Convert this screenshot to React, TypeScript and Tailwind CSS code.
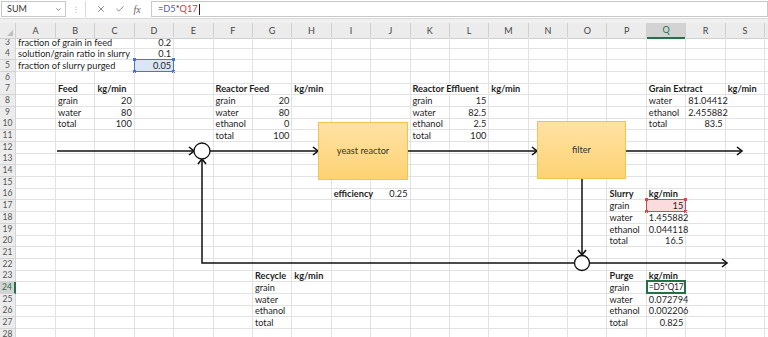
import { X, Check, ChevronDown } from "lucide-react";

type Cell = { t: string; span?: number; r?: boolean; b?: boolean; hl?: "blue" | "red" | "green" };

const COLS = ["A", "B", "C", "D", "E", "F", "G", "H", "I", "J", "K", "L", "M", "N", "O", "P", "Q", "R", "S", "T"];
const ROWS = Array.from({ length: 26 }, (_, i) => i + 3);

const data: Record<number, Record<string, Cell>> = {
  3: { A: { t: "fraction of grain in feed", span: 3 }, D: { t: "0.2", r: true } },
  4: { A: { t: "solution/grain ratio in slurry", span: 3 }, D: { t: "0.1", r: true } },
  5: { A: { t: "fraction of slurry purged", span: 3 }, D: { t: "0.05", r: true, hl: "blue" } },
  7: {
    B: { t: "Feed", b: true },
    C: { t: "kg/min", b: true },
    F: { t: "Reactor Feed", b: true, span: 2 },
    H: { t: "kg/min", b: true },
    K: { t: "Reactor Effluent", b: true, span: 2 },
    M: { t: "kg/min", b: true },
    Q: { t: "Grain Extract", b: true, span: 2 },
    S: { t: "kg/min", b: true },
  },
  8: {
    B: { t: "grain" },
    C: { t: "20", r: true },
    F: { t: "grain" },
    G: { t: "20", r: true },
    K: { t: "grain" },
    L: { t: "15", r: true },
    Q: { t: "water" },
    R: { t: "81.04412", r: true },
  },
  9: {
    B: { t: "water" },
    C: { t: "80", r: true },
    F: { t: "water" },
    G: { t: "80", r: true },
    K: { t: "water" },
    L: { t: "82.5", r: true },
    Q: { t: "ethanol" },
    R: { t: "2.455882", r: true },
  },
  10: {
    B: { t: "total" },
    C: { t: "100", r: true },
    F: { t: "ethanol" },
    G: { t: "0", r: true },
    K: { t: "ethanol" },
    L: { t: "2.5", r: true },
    Q: { t: "total" },
    R: { t: "83.5", r: true },
  },
  11: { F: { t: "total" }, G: { t: "100", r: true }, K: { t: "total" }, L: { t: "100", r: true } },
  16: { I: { t: "efficiency", b: true }, J: { t: "0.25", r: true }, P: { t: "Slurry", b: true }, Q: { t: "kg/min", b: true } },
  17: { P: { t: "grain" }, Q: { t: "15", r: true, hl: "red" } },
  18: { P: { t: "water" }, Q: { t: "1.455882", r: true } },
  19: { P: { t: "ethanol" }, Q: { t: "0.044118", r: true } },
  20: { P: { t: "total" }, Q: { t: "16.5", r: true } },
  23: { G: { t: "Recycle", b: true }, H: { t: "kg/min", b: true }, P: { t: "Purge", b: true }, Q: { t: "kg/min", b: true } },
  24: { G: { t: "grain" }, P: { t: "grain" }, Q: { t: "=D5*Q17", hl: "green" } },
  25: { G: { t: "water" }, P: { t: "water" }, Q: { t: "0.072794", r: true } },
  26: { G: { t: "ethanol" }, P: { t: "ethanol" }, Q: { t: "0.002206", r: true } },
  27: { G: { t: "total" }, P: { t: "total" }, Q: { t: "0.825", r: true } },
};

function Handles({ color }: { color: string }) {
  const sq = "absolute w-[3px] h-[3px] " + color;
  return (
    <>
      <span className={sq + " -left-[2px] -top-[2px]"} />
      <span className={sq + " -right-[2px] -top-[2px]"} />
      <span className={sq + " -left-[2px] -bottom-[2px]"} />
      <span className={sq + " -right-[2px] -bottom-[2px]"} />
    </>
  );
}

function SheetRow({ row }: { row: number }) {
  const cells = data[row] || {};
  const out = [];
  let i = 0;
  while (i < COLS.length) {
    const col = COLS[i];
    const c = cells[col];
    const span = c?.span || 1;
    let bg = "";
    if (c?.hl === "blue") bg = "bg-[#dbe5f5]";
    if (c?.hl === "red") bg = "bg-[#fadcdc]";
    if (c?.hl === "green") bg = "tracking-[-0.3px] text-[8.5px]";
    out.push(
      <div
        key={col}
        className={
          "relative border-r border-b border-[#e2e2e2] px-[2px] whitespace-nowrap leading-[11px] " +
          (span === 2 ? "col-span-2 " : span === 3 ? "col-span-3 " : "") +
          (c?.r ? "text-right " : "") +
          (c?.b ? "font-bold " : "") +
          bg
        }
      >
        {c?.t}
        {c?.hl === "blue" && (
          <div className="absolute -left-px -top-px -right-px -bottom-px border border-[#4a74c9]">
            <Handles color="bg-[#4a74c9]" />
          </div>
        )}
        {c?.hl === "red" && (
          <div className="absolute -left-px -top-px -right-px -bottom-px border border-[#d9454f]">
            <Handles color="bg-[#d9454f]" />
          </div>
        )}
        {c?.hl === "green" && (
          <div className="absolute -left-px -top-[2px] -right-px -bottom-px border-2 border-[#217346]" />
        )}
      </div>
    );
    i += span;
  }
  const active = row === 24;
  return (
    <div className="grid grid-cols-[16px_40px_repeat(19,39.4px)] h-[11.7px]">
      <div
        className={
          "border-r border-b border-[#d4d4d4] text-center leading-[11px] text-[8.5px] " +
          (active ? "bg-[#d3d3d3] text-[#217346] border-r-2 border-r-[#217346]" : "bg-[#ececec] text-[#555]")
        }
      >
        {row}
      </div>
      {out}
    </div>
  );
}

function Arrow({ x, y, dir }: { x: number; y: number; dir: "r" | "d" | "u" }) {
  let pts = "";
  if (dir === "r") pts = `${x - 5},${y - 4} ${x},${y} ${x - 5},${y + 4}`;
  if (dir === "d") pts = `${x - 4},${y - 5} ${x},${y} ${x + 4},${y - 5}`;
  if (dir === "u") pts = `${x - 4},${y + 5} ${x},${y} ${x + 4},${y + 5}`;
  return <polyline points={pts} fill="none" stroke="#111" strokeWidth="1.6" />;
}

function Diagram() {
  return (
    <svg className="absolute left-0 top-0 pointer-events-none" width="768" height="337">
      <g stroke="#111" strokeWidth="1.5" fill="none">
        <line x1="57" y1="151" x2="194" y2="151" />
        <line x1="210" y1="151" x2="318" y2="151" />
        <line x1="408" y1="151" x2="537" y2="151" />
        <line x1="626" y1="151" x2="742" y2="151" />
        <line x1="582" y1="179" x2="582" y2="255" />
        <line x1="590" y1="263" x2="727" y2="263" />
        <polyline points="574.5,263 202,263 202,159" />
      </g>
      <Arrow x={194} y={151} dir="r" />
      <Arrow x={318} y={151} dir="r" />
      <Arrow x={537} y={151} dir="r" />
      <Arrow x={742} y={151} dir="r" />
      <Arrow x={727} y={263} dir="r" />
      <Arrow x={582} y={255} dir="d" />
      <Arrow x={202} y={159} dir="u" />
      <circle cx="202" cy="151" r="8" fill="#fff" stroke="#111" strokeWidth="1.3" />
      <circle cx="582" cy="263" r="7.5" fill="#fff" stroke="#111" strokeWidth="1.3" />
    </svg>
  );
}

function ProcessBox({ label, pos }: { label: string; pos: string }) {
  return (
    <div
      className={
        "absolute flex items-center justify-center border border-[#f4c24e] bg-gradient-to-b from-[#ffe2a3] to-[#fdd273] text-[#333] text-[9.2px] " +
        pos
      }
    >
      {label}
    </div>
  );
}

export default function App() {
  return (
    <div
      className="relative w-[768px] h-[337px] overflow-hidden bg-white text-[9.2px] text-[#1e1e1e]"
      style={{ fontFamily: "Lato, 'Open Sans', sans-serif" }}
    >
      {/* formula bar */}
      <div className="flex h-[19px] items-center border-b border-[#dadada] bg-white">
        <div className="ml-[1px] flex h-[16px] w-[65px] items-center justify-between border border-[#c8c8c8] pl-[5px] pr-[3px] text-[9px] text-[#333]">
          <span>SUM</span>
          <ChevronDown size={7} strokeWidth={3} className="text-[#777]" />
        </div>
        <div className="flex w-[19px] justify-center text-[#aaa] text-[8px] leading-none">⋮</div>
        <div className="flex h-[16px] w-[66px] items-center justify-around border-l border-[#dadada] px-[6px] text-[#555]">
          <X size={10} strokeWidth={1.6} />
          <Check size={10} strokeWidth={1.6} />
          <span className="italic text-[10px] text-[#666]" style={{ fontFamily: "'Liberation Serif', serif" }}>
            fx
          </span>
        </div>
        <div className="flex h-[16px] flex-1 items-center border border-[#c8c8c8] pl-[6px] text-[9.2px]">
          <span>=</span>
          <span className="text-[#3a68c8]">D5</span>
          <span>*</span>
          <span className="text-[#cc3b3b]">Q17</span>
          <span className="ml-px h-[11px] w-px bg-[#222]" />
        </div>
      </div>
      <div className="h-[4px] bg-[#f0f0f0]" />

      {/* column headers */}
      <div className="grid grid-cols-[16px_40px_repeat(19,39.4px)] h-[13.5px] text-[9px] text-[#444]">
        <div className="relative border-r border-b border-[#d0d0d0] bg-[#ececec]">
          <span className="absolute right-[2px] bottom-[2px] h-0 w-0 border-l-[6px] border-l-transparent border-b-[6px] border-b-[#bdbdbd]" />
        </div>
        {COLS.map((c) => (
          <div
            key={c}
            className={
              "flex items-center justify-center border-r border-b " +
              (c === "Q"
                ? "bg-[#d3d3d3] text-[#217346] border-b-2 border-b-[#217346] border-r-[#d0d0d0]"
                : "bg-[#ececec] border-[#d0d0d0]")
            }
          >
            {c === "T" ? "" : c}
          </div>
        ))}
      </div>

      {ROWS.map((r) => (
        <SheetRow key={r} row={r} />
      ))}

      <Diagram />
      <ProcessBox label="yeast reactor" pos="left-[318px] top-[122px] w-[90px] h-[58px]" />
      <ProcessBox label="filter" pos="left-[537px] top-[121px] w-[89px] h-[58px]" />
    </div>
  );
}
